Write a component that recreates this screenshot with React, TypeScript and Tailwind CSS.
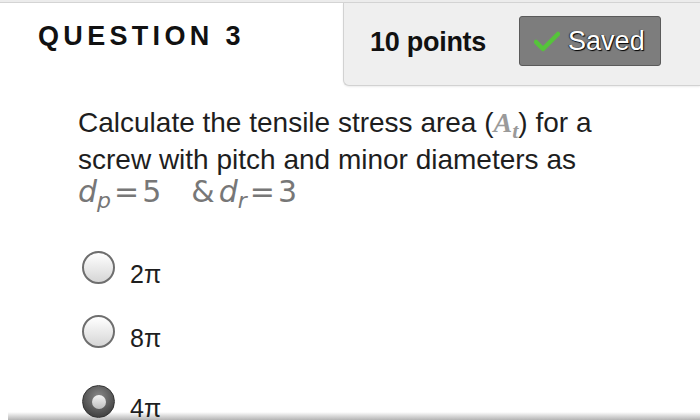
import React from 'react';

const Radio: React.FC<{checked?: boolean}> = ({checked}) => {
    if (checked) {
        return (
            <div className="flex h-[33px] w-[33px] items-center justify-center rounded-full border border-[#333] bg-[radial-gradient(circle_at_50%_35%,#8a8a8a,#2e2e2e)]">
                <div className="h-[14px] w-[14px] rounded-full bg-[linear-gradient(#f4f4f4,#bdbdbd)]"/>
            </div>
        );
    }
    return (
        <div className="h-[33px] w-[33px] rounded-full border-2 border-[#6e6e6e] bg-[linear-gradient(#ffffff,#d6d6d6)]"/>
    );
};

const options = [
    {label: '2π', checked: false, gap: 'mt-0'},
    {label: '8π', checked: false, gap: 'mt-[31px]'},
    {label: '4π', checked: true, gap: 'mt-[37px]'}
];

const App: React.FC = () => {
    return (
        <div className="relative flex h-[420px] w-[700px] flex-col overflow-hidden bg-white font-['Liberation_Sans',Arial,sans-serif] text-[#1a1a1a]">
            {/* bottom edge shade, sits under the content */}
            <div className="absolute bottom-0 left-[8px] right-0 h-[8px] bg-[linear-gradient(#ffffff,#b4b4b4)]"/>

            <div className="h-[3px] shrink-0 border-b border-[#d4d4d4] bg-[#ececec]"/>

            {/* header */}
            <div className="flex h-[83px] shrink-0">
                <div className="flex w-[343px] pl-[38px] pt-[13px]">
                    <h1 className="text-[27px] font-bold tracking-[0.16em] text-[#111]">QUESTION 3</h1>
                </div>
                <div className="flex flex-1 items-start gap-[33px] rounded-bl-[6px] border-b border-l border-[#d2d2d2] bg-[#efefef] pl-[26px] pt-[13px] shadow-[0_1px_2px_rgba(0,0,0,0.08)]">
                    <span className="mt-[6px] text-[27px] font-bold tracking-[-0.01em] text-[#111]">10 points</span>
                    <div className="flex h-[50px] w-[142px] items-center gap-[8px] rounded-[3px] border border-[#5a5a5a] bg-[#7d7d7d] pl-[14px]">
                        <svg width="26" height="22" viewBox="0 0 26 22">
                            <path d="M2 12 L9 19 L24 4" fill="none" stroke="#55c43a" strokeWidth="4.5" strokeLinecap="round" strokeLinejoin="round"/>
                        </svg>
                        <span className="text-[27px] text-white [text-shadow:1px_1px_1px_#000,-1px_0_1px_#333]">Saved</span>
                    </div>
                </div>
            </div>

            {/* question body */}
            <div className="relative flex flex-col pl-[78px] pt-[18px]">
                <p className="text-[28px] leading-[37px] text-[#1e1e1e]">
                    Calculate the tensile stress area (
                    <span className="font-['Liberation_Serif',serif] font-bold italic text-[#9a9a9a]">
                        A<sub className="text-[22px]">t</sub>
                    </span>
                    ) for a
                    <br/>
                    screw with pitch and minor diameters as
                </p>
                <div className="-mt-[2px] h-[32px] font-['DejaVu_Sans',sans-serif] text-[30px] leading-[32px] text-[#777]">
                    <span className="italic">d</span><sub className="text-[22px] italic">p</sub>
                    <span className="mx-[3px]">=</span>5
                    <span className="ml-[30px] mr-[4px]">&amp;</span>
                    <span className="italic">d</span><sub className="text-[22px] italic">r</sub>
                    <span className="mx-[3px]">=</span>3
                </div>

                <div className="mt-[43px] flex flex-col pl-[4px]">
                    {options.map(o => (
                        <div key={o.label} className={`flex h-[33px] items-center gap-[15px] ${o.gap}`}>
                            <Radio checked={o.checked}/>
                            <span className="translate-y-[7px] text-[25px] leading-none text-[#1e1e1e]">{o.label}</span>
                        </div>
                    ))}
                </div>
            </div>
        </div>
    );
};

export default App;
